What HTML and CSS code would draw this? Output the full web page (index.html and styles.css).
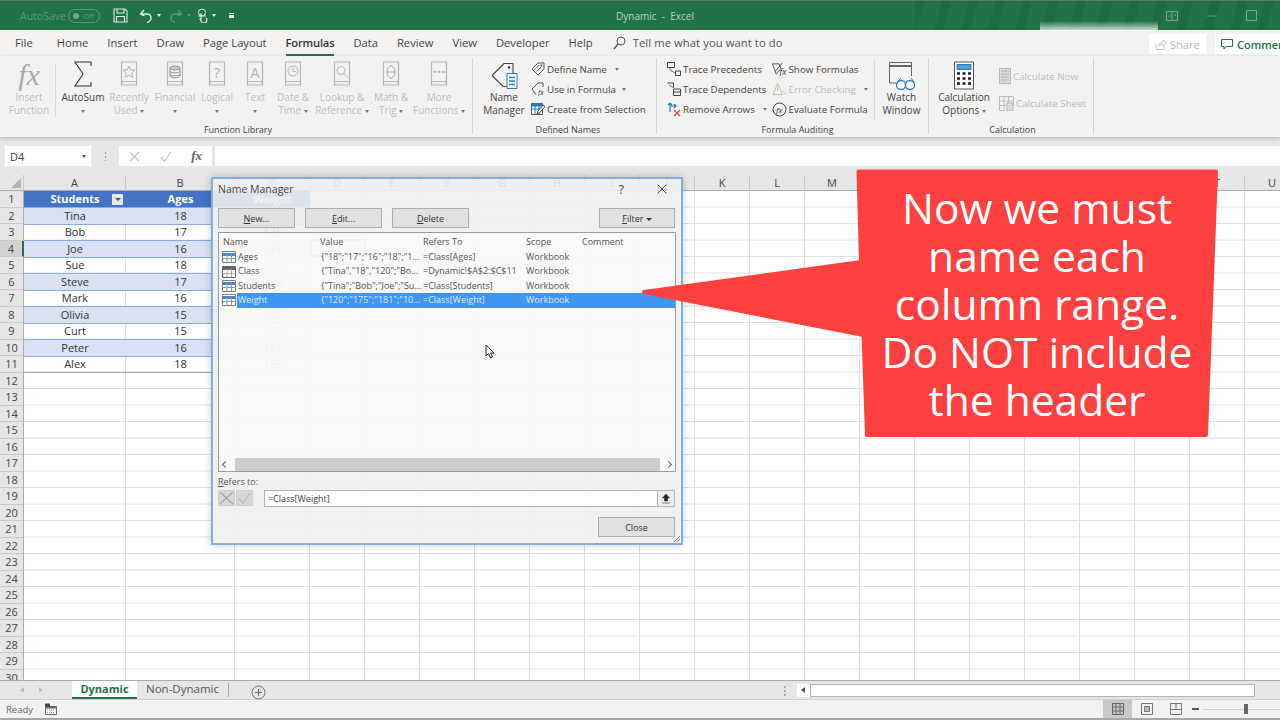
FILE: index.html
```html
<!DOCTYPE html>
<html lang="en">
<head>
    <meta charset="UTF-8">
    <title>Dynamic - Excel</title>
    <link rel="stylesheet" href="styles.css">
</head>
<body>
    <svg class="icon-defs" width="0" height="0">
        <symbol id="i-book" viewBox="0 0 18 25">
            <path d="M1.5 1h15v23h-15zM1.5 20.5h15" fill="none" stroke="currentColor" stroke-width="1.2"/>
        </symbol>
        <symbol id="i-table" viewBox="0 0 14 12">
            <path d="M.5.5h13v11H.5z" fill="#fff" stroke="#7d7d7d"/>
            <path d="M.5 3.5h13" stroke="#4a86c8" stroke-width="3"/>
            <path d="M.5 7.5h13M5 3v8M9.5 3v8" stroke="#7d9ac0"/>
        </symbol>
        <symbol id="i-tag" viewBox="0 0 14 14">
            <path d="M1 7 7 1h6v6l-6 6z" fill="none" stroke="#555" stroke-width="1"/>
            <path d="M3.5 7.5 8 3M5.5 9.5 10 5" stroke="#888"/>
            <circle cx="10.5" cy="3.5" r="1" fill="#555"/>
        </symbol>
    </svg>

    <header class="title-bar">
        <div class="qat">
            <span class="autosave">AutoSave</span>
            <span class="toggle"><i></i>Off</span>
            <svg class="qat-save" width="15" height="15" viewBox="0 0 15 15"><path d="M1 1h11l2 2v11H1zM4 1v4h7V1M3.5 14V8.5h8V14" fill="none" stroke="#d9e8df" stroke-width="1.1"/></svg>
            <svg class="qat-undo" width="14" height="14" viewBox="0 0 14 14"><path d="M5 1 1.5 5 5.500 7M2 5h6a4 4 0 0 1 2 7.500L8 14" fill="none" stroke="#e2eee7" stroke-width="1.3"/></svg>
            <span class="qat-arrow"></span>
            <svg class="qat-redo" width="14" height="14" viewBox="0 0 14 14"><path d="M9 1l3.5 4-4 2M12 5H6a4 4 0 0 0-2 7.500L6 14" fill="none" stroke="#5d9b78" stroke-width="1.3"/></svg>
            <span class="qat-arrow dim"></span>
            <svg class="qat-touch" width="12" height="15" viewBox="0 0 12 15"><circle cx="6" cy="4.5" r="3.5" fill="none" stroke="#e2eee7"/><path d="M2 8h8M5 5v6l-2 0M5 11a3 3 0 1 0 5-1" fill="none" stroke="#e2eee7" stroke-width="1.1"/></svg>
            <span class="qat-arrow"></span>
            <span class="qat-more"></span>
        </div>
        <div class="app-title">Dynamic  -  Excel</div>
        <div class="title-smear"></div>
        <div class="window-btns">
            <svg width="12" height="11" viewBox="0 0 12 11"><path d="M.5 1.500h11v9H.5zM6 1.500v9M3 6l2 0M8 5l2 0" fill="none" stroke="#76a88b"/></svg>
            <svg width="10" height="2" viewBox="0 0 10 2"><path d="M0 1h10" stroke="#5f9c7a"/></svg>
            <svg width="11" height="11" viewBox="0 0 11 11"><path d="M.5.500h10v10H.5z" fill="none" stroke="#76a88b"/></svg>
        </div>
    </header>

    <nav class="tabs">
        <span class="tab tab-file">File</span>
        <span class="tab">Home</span>
        <span class="tab">Insert</span>
        <span class="tab">Draw</span>
        <span class="tab">Page Layout</span>
        <span class="tab active">Formulas</span>
        <span class="tab">Data</span>
        <span class="tab">Review</span>
        <span class="tab">View</span>
        <span class="tab">Developer</span>
        <span class="tab">Help</span>
        <span class="tell-me">
            <svg width="13" height="14" viewBox="0 0 13 14"><circle cx="8" cy="5" r="4" fill="none" stroke="#555"/><path d="M5 8 1 13" stroke="#555" stroke-width="1.3"/></svg>
            Tell me what you want to do
        </span>
        <span class="share">
            <svg width="11" height="11" viewBox="0 0 11 11"><path d="M1 5v5.500h8V7M4 7c0-3 2-4 4-4V1l3 3-3 3V5C6 5 5 6 4 7z" fill="none" stroke="#c4c4c4"/></svg>
            Share
        </span>
        <span class="comments">
            <svg width="12" height="11" viewBox="0 0 12 11"><path d="M.5.500h11v7H5l-2 2.500V7.500H.5z" fill="none" stroke="#217346"/></svg>
            Comments
        </span>
    </nav>

    <section class="ribbon">
        <div class="group group-library">
            <div class="group-body">
                <div class="big-btn w50 off">
                    <span class="fx-big">fx</span>
                    <span class="big-label">Insert<br>Function</span>
                </div>
                <span class="mini-sep"></span>
                <div class="big-btn w48">
                    <span class="sigma">
                        <svg width="20" height="26" viewBox="0 0 20 26"><path d="M18 5V1H2l8 12-8 12h16v-4" fill="none" stroke="#333" stroke-width="1.1"/></svg>
                    </span>
                    <span class="big-label">AutoSum<br><i class="caret"></i></span>
                </div>
                <div class="big-btn w44 off">
                    <span class="book"><svg width="18" height="25"><use href="#i-book"/></svg><svg class="glyph" width="14" height="14" viewBox="0 0 14 14"><path d="m7 1 1.800 4H13L9.700 8l1 4.500L7 10l-3.700 2.500 1-4.500L1 5h4.200z" fill="none" stroke="#b5b5b5"/></svg></span>
                    <span class="big-label">Recently<br>Used <i class="caret"></i></span>
                </div>
                <div class="big-btn w48 off">
                    <span class="book"><svg width="18" height="25"><use href="#i-book"/></svg><svg class="glyph" width="12" height="14" viewBox="0 0 12 14"><ellipse cx="6" cy="3" rx="5" ry="2" fill="#ccc" stroke="#8f8f8f"/><path d="M1 3v8c0 2.500 10 2.500 10 0V3M1 6c0 2.500 10 2.500 10 0M1 9c0 2.500 10 2.500 10 0" fill="none" stroke="#8f8f8f"/></svg></span>
                    <span class="big-label">Financial<br><i class="caret"></i></span>
                </div>
                <div class="big-btn w36 off">
                    <span class="book"><svg width="18" height="25"><use href="#i-book"/></svg><span class="glyph-text">?</span></span>
                    <span class="big-label">Logical<br><i class="caret"></i></span>
                </div>
                <div class="big-btn w40 off">
                    <span class="book"><svg width="18" height="25"><use href="#i-book"/></svg><span class="glyph-text">A</span></span>
                    <span class="big-label">Text<br><i class="caret"></i></span>
                </div>
                <div class="big-btn w36 off">
                    <span class="book"><svg width="18" height="25"><use href="#i-book"/></svg><svg class="glyph" width="12" height="12" viewBox="0 0 12 12"><circle cx="6" cy="6" r="5" fill="none" stroke="#b5b5b5"/><path d="M6 3v3.500h3" fill="none" stroke="#b5b5b5"/></svg></span>
                    <span class="big-label">Date &amp;<br>Time <i class="caret"></i></span>
                </div>
                <div class="big-btn w62 off">
                    <span class="book"><svg width="18" height="25"><use href="#i-book"/></svg><svg class="glyph" width="13" height="13" viewBox="0 0 13 13"><circle cx="5.5" cy="5.5" r="4" fill="none" stroke="#b5b5b5"/><path d="m8.500 8.500 4 4" stroke="#b5b5b5"/></svg></span>
                    <span class="big-label">Lookup &amp;<br>Reference <i class="caret"></i></span>
                </div>
                <div class="big-btn w36 off">
                    <span class="book"><svg width="18" height="25"><use href="#i-book"/></svg><svg class="glyph" width="10" height="14" viewBox="0 0 10 14"><ellipse cx="5" cy="7" rx="4" ry="6" fill="none" stroke="#a5a5a5"/><path d="M1 7h8" stroke="#a5a5a5"/></svg></span>
                    <span class="big-label">Math &amp;<br>Trig <i class="caret"></i></span>
                </div>
                <div class="big-btn w60 off">
                    <span class="book"><svg width="18" height="25"><use href="#i-book"/></svg><span class="glyph-text dots">···</span></span>
                    <span class="big-label">More<br>Functions <i class="caret"></i></span>
                </div>
            </div>
            <div class="group-label">Function Library</div>
        </div>

        <div class="group group-names">
            <div class="group-body">
                <div class="big-btn w48">
                    <svg class="big-icon" width="27" height="28" viewBox="0 0 27 28">
                        <path d="M1 14 13 2h9v12M1 14l11 11h5" fill="none" stroke="#444" stroke-width="1.1"/>
                        <circle cx="18" cy="6" r="1.2" fill="#333"/>
                        <path d="M16 12h10v15H16z" fill="#fff" stroke="#2b7cc4"/>
                        <path d="M18 16h6M18 19.500h6M18 23h6" stroke="#2b7cc4" stroke-width="1.6"/>
                    </svg>
                    <span class="big-label">Name<br>Manager</span>
                </div>
                <div class="small-col names-col">
                    <div class="small-btn"><svg width="14" height="14"><use href="#i-tag"/></svg>Define Name <i class="caret gap"></i></div>
                    <div class="small-btn"><svg width="14" height="14" viewBox="0 0 14 14"><path d="M5 12.500 1 7l6-6h5v4" fill="none" stroke="#555"/><text x="7" y="13" font-size="7" font-style="italic" fill="#333">fx</text></svg>Use in Formula <i class="caret"></i></div>
                    <div class="small-btn"><svg width="14" height="14" viewBox="0 0 14 14"><path d="M.5 1.500h11v11H.5z" fill="#fff" stroke="#555"/><path d="M.5 3h11" stroke="#2b7cc4" stroke-width="3"/><path d="M4 3v9M8 3v9M1 7h10" stroke="#2b7cc4"/><path d="m6 12 1-3 5-6 2 1.500-5 6z" fill="#fff" stroke="#444"/></svg>Create from Selection</div>
                </div>
            </div>
            <div class="group-label">Defined Names</div>
        </div>

        <div class="group group-audit">
            <div class="group-body">
                <div class="small-col audit-col">
                    <div class="small-btn"><svg width="14" height="14" viewBox="0 0 14 14"><path d="M.500.500h7v5h-7zM8.500 9h5v4.500h-5z" fill="none" stroke="#444"/><path d="M3 6v2l5 3" fill="none" stroke="#2b7cc4"/></svg>Trace Precedents</div>
                    <div class="small-btn"><svg width="14" height="14" viewBox="0 0 14 14"><path d="M.500 1h6v4M6.500 7h7v6.500h-7zM6.500 10h7" fill="none" stroke="#444"/><path d="M2 3l5 3" fill="none" stroke="#2b7cc4"/></svg>Trace Dependents</div>
                    <div class="small-btn"><svg width="14" height="15" viewBox="0 0 14 15"><path d="M3 1v9M3 1l-2 2M3 1l2 2M3 4h6M7 2l2 2-2 2" fill="none" stroke="#2b7cc4" stroke-width="1.2"/><path d="m7 8 6 6M13 8l-6 6" stroke="#d9483b" stroke-width="1.2"/></svg>Remove Arrows <i class="caret gap"></i></div>
                </div>
                <div class="small-col audit-col">
                    <div class="small-btn"><svg width="15" height="14" viewBox="0 0 16 14"><path d="M.500 1.500h7l2 5-5 6z" fill="none" stroke="#555"/><path d="M3 10 11 .5" stroke="#555"/><text x="8" y="13" font-size="9" font-style="italic" fill="#333">fx</text></svg>Show Formulas</div>
                    <div class="small-btn off"><svg width="15" height="14" viewBox="0 0 16 14"><path d="m6 1 5 12H1zM11 9l4 4" fill="none" stroke="#bbb"/><path d="M6 5v4" stroke="#c9b77a"/></svg>Error Checking <i class="caret gap"></i></div>
                    <div class="small-btn"><svg width="15" height="15" viewBox="0 0 15 15"><circle cx="7.5" cy="7.5" r="6.5" fill="none" stroke="#444"/><text x="4" y="10.500" font-size="8" font-style="italic" fill="#333">fx</text></svg>Evaluate Formula</div>
                </div>
                <span class="group-sep"></span>
                <div class="big-btn w53">
                    <svg class="big-icon" width="27" height="29" viewBox="0 0 27 29">
                        <path d="M1.500 22V1.500h22V15" fill="none" stroke="#666"/>
                        <path d="M1.500 5h22" stroke="#666" stroke-width="2"/>
                        <path d="M1.500 22h7" stroke="#666"/>
                        <circle cx="13" cy="24" r="4.5" fill="#fff" stroke="#2b7cc4" stroke-width="1.3"/>
                        <circle cx="22" cy="24" r="4.5" fill="#fff" stroke="#2b7cc4" stroke-width="1.3"/>
                        <path d="M9 21l4-4M26 21l-3-4" stroke="#2b7cc4"/>
                    </svg>
                    <span class="big-label">Watch<br>Window</span>
                </div>
            </div>
            <div class="group-label">Formula Auditing</div>
        </div>

        <div class="group group-calc">
            <div class="group-body">
                <div class="big-btn w64">
                    <svg class="big-icon" width="20" height="28" viewBox="0 0 20 28">
                        <path d="M.5.500h19v27H.5z" fill="#fff" stroke="#555"/>
                        <path d="M3 3h14v5H3z" fill="#5b9bd5" stroke="#2b7cc4"/>
                        <path d="M3 12h3M8.500 12h3M14 12h3M3 17h3M8.500 17h3M14 17h3M3 22h3M8.500 22h3M14 22h3" stroke="#222" stroke-width="2.5"/>
                    </svg>
                    <span class="big-label">Calculation<br>Options <i class="caret"></i></span>
                </div>
                <div class="small-col calc-col off">
                    <div class="small-btn"><svg width="12" height="16" viewBox="0 0 12 16"><path d="M.5.500h11v15H.5z" fill="#ddd" stroke="#b5b5b5"/><path d="M2.500 3h7M2.500 6h7M2.500 9h7M2.500 12h7" stroke="#aaa" stroke-dasharray="2 1" stroke-width="1.5"/></svg>Calculate Now</div>
                    <div class="small-btn"><svg width="15" height="15" viewBox="0 0 15 15"><path d="M.5.500h14v9h-14zM5 .5v14H.5v-5M9.500 .5v9M.5 5h14" fill="none" stroke="#bbb"/><path d="M8 7h6v8H8z" fill="#ddd" stroke="#b5b5b5"/></svg>Calculate Sheet</div>
                </div>
            </div>
            <div class="group-label">Calculation</div>
        </div>
    </section>

    <div class="formula-bar">
        <div class="name-box">D4<i class="caret"></i></div>
        <span class="fb-dots"></span>
        <div class="fb-btns">
            <svg width="11" height="11" viewBox="0 0 11 11"><path d="m1 1 9 9M10 1l-9 9" stroke="#c4c4c4" stroke-width="1.2"/></svg>
            <svg width="12" height="11" viewBox="0 0 12 11"><path d="m1 6 3.500 4L11 1" fill="none" stroke="#c4c4c4" stroke-width="1.2"/></svg>
            <span class="fb-fx">fx</span>
        </div>
        <div class="fb-input"></div>
    </div>

    <main class="sheet">
        <div class="col-heads">
            <span class="corner"><i></i></span>
            <span class="col-a">A</span><span class="col-b">B</span><span class="col-c">C</span>
            <span>D</span><span>E</span><span>F</span><span>G</span><span>H</span><span>I</span><span>J</span>
            <span>K</span><span>L</span><span>M</span><span>N</span><span>O</span><span>P</span><span>Q</span>
            <span>R</span><span>S</span><span>T</span><span>U</span>
        </div>
        <div class="sheet-body">
            <div class="row-heads">
                <span>1</span><span>2</span><span>3</span><span class="current">4</span><span>5</span>
                <span>6</span><span>7</span><span>8</span><span>9</span><span>10</span>
                <span>11</span><span>12</span><span>13</span><span>14</span><span>15</span>
                <span>16</span><span>17</span><span>18</span><span>19</span><span>20</span>
                <span>21</span><span>22</span><span>23</span><span>24</span><span>25</span>
                <span>26</span><span>27</span><span>28</span><span>29</span><span>30</span>
            </div>
            <div class="cells">
                <table class="class-table">
                    <tr class="head"><td class="has-filter">Students<i class="filter-btn"></i></td><td>Ages</td><td>Weight</td></tr>
                    <tr><td>Tina</td><td>18</td><td>120</td></tr>
                    <tr><td>Bob</td><td>17</td><td>175</td></tr>
                    <tr><td>Joe</td><td>16</td><td>181</td></tr>
                    <tr><td>Sue</td><td>18</td><td>105</td></tr>
                    <tr><td>Steve</td><td>17</td><td>120</td></tr>
                    <tr><td>Mark</td><td>16</td><td>198</td></tr>
                    <tr><td>Olivia</td><td>15</td><td>135</td></tr>
                    <tr><td>Curt</td><td>15</td><td>165</td></tr>
                    <tr><td>Peter</td><td>16</td><td>171</td></tr>
                    <tr><td>Alex</td><td>18</td><td>155</td></tr>
                </table>
                <div class="active-cell"></div>
            </div>
        </div>
    </main>

    <div class="sheet-tabs">
        <span class="nav-arrows"><i class="arrow-l"></i><i class="arrow-r"></i></span>
        <span class="sheet-tab active">Dynamic</span>
        <span class="sheet-tab">Non-Dynamic</span>
        <span class="add-sheet">
            <svg width="15" height="15" viewBox="0 0 15 15"><circle cx="7.5" cy="7.5" r="6.5" fill="none" stroke="#777"/><path d="M7.500 4v7M4 7.500h7" stroke="#666"/></svg>
        </span>
        <span class="h-scroll"><span class="h-dots"></span><i class="h-left"></i><span class="h-track"></span></span>
    </div>

    <footer class="status-bar">
        <span class="ready">Ready</span>
        <svg width="12" height="12" viewBox="0 0 12 12"><path d="M.5 3.500h11v8H.5z" fill="#fff" stroke="#666"/><path d="M.5 4.500h11" stroke="#666" stroke-width="2"/><path d="M0 2h5" stroke="#444" stroke-width="3"/><path d="M2 7h8M2 9.500h8" stroke="#999" stroke-dasharray="1 1"/></svg>
        <span class="view-btns">
            <span class="view-btn on"><svg width="12" height="12" viewBox="0 0 12 12"><path d="M.5.500h11v11H.5zM4 .5v11M8 .5v11M.5 4h11M.5 8h11" fill="none" stroke="#666"/></svg></span>
            <span class="view-btn"><svg width="12" height="12" viewBox="0 0 12 12"><path d="M.5.500h11v11H.5z" fill="none" stroke="#777"/><path d="M3.500 3.500h5v5h-5z" fill="#bbb" stroke="#777"/></svg></span>
            <span class="view-btn"><svg width="12" height="12" viewBox="0 0 12 12"><path d="M.5.500h11v11H.5zM6 .5v6H.5M6 6.500h5.500" fill="none" stroke="#777"/></svg></span>
        </span>
        <span class="zoom-slider"><i class="minus"></i><span class="track"></span><i class="thumb"></i></span>
    </footer>

    <!-- dialog over the sheet, see-through like in the video -->
    <div class="dialog">
        <div class="dialog-title">
            <span>Name Manager</span>
            <span class="dlg-help">?</span>
            <svg width="10" height="10" viewBox="0 0 10 10"><path d="m.5.500 9 9M9.500.500l-9 9" stroke="#444"/></svg>
        </div>
        <div class="dialog-actions">
            <button class="dlg-btn"><u>N</u>ew...</button>
            <button class="dlg-btn"><u>E</u>dit...</button>
            <button class="dlg-btn"><u>D</u>elete</button>
            <button class="dlg-btn filter"><u>F</u>ilter <i class="caret dark"></i></button>
        </div>
        <div class="name-list">
            <div class="list-head"><span>Name</span><span>Value</span><span>Refers To</span><span>Scope</span><span>Comment</span></div>
            <div class="list-row">
                <svg width="14" height="12"><use href="#i-table"/></svg>
                <div class="row-body"><span>Ages</span><span>{"18";"17";"16";"18";"1...</span><span>=Class[Ages]</span><span>Workbook</span></div>
            </div>
            <div class="list-row">
                <svg width="14" height="12" viewBox="0 0 14 12"><path d="M.5.500h13v11H.5z" fill="#fff" stroke="#666"/><path d="M.5 2.500h13" stroke="#666" stroke-width="3"/><path d="M.5 7.500h13M5 3v8M9.500 3v8" stroke="#aaa"/></svg>
                <div class="row-body"><span>Class</span><span>{"Tina","18","120";"Bo...</span><span>=Dynamic!$A$2:$C$11</span><span>Workbook</span></div>
            </div>
            <div class="list-row">
                <svg width="14" height="12"><use href="#i-table"/></svg>
                <div class="row-body"><span>Students</span><span>{"Tina";"Bob";"Joe";"Su...</span><span>=Class[Students]</span><span>Workbook</span></div>
            </div>
            <div class="list-row selected">
                <svg width="14" height="12"><use href="#i-table"/></svg>
                <div class="row-body"><span>Weight</span><span>{"120";"175";"181";"10...</span><span>=Class[Weight]</span><span>Workbook</span></div>
            </div>
            <div class="list-scroll">
                <i class="chev left"></i><span class="list-thumb"></span><i class="chev right"></i>
            </div>
        </div>
        <label class="refers-label"><u>R</u>efers to:</label>
        <div class="refers-row">
            <span class="ref-btn"><svg width="15" height="14" viewBox="0 0 15 14"><path d="m1 1 13 12M14 1 1 13" stroke="#a9a9a9" stroke-width="1.5"/></svg></span>
            <span class="ref-btn"><svg width="13" height="12" viewBox="0 0 13 12"><path d="m1 7 4 4 7-10" fill="none" stroke="#b9b9b9" stroke-width="1.3"/></svg></span>
            <div class="ref-input">
                <span>=Class[Weight]</span>
                <span class="ref-pick"><svg width="10" height="11" viewBox="0 0 10 11"><path d="M5 1 8.500 5H6.500v3h-3V5H1.500zM1 10h8" fill="#222" stroke="#222" stroke-width=".5"/></svg></span>
            </div>
        </div>
        <div class="dialog-foot"><button class="dlg-btn">Close</button></div>
        <svg class="grip" width="8" height="8" viewBox="0 0 8 8"><path d="M7 1 1 7M7 4 4 7" stroke="#888"/></svg>
    </div>

    <svg class="cursor" width="10" height="15" viewBox="0 0 10 15"><path d="M1 1v11l2.500-2.500L5.500 14l2-1-2-4H9z" fill="#fff" stroke="#222"/></svg>

    <svg class="callout-shape" width="590" height="280" viewBox="640 165 590 280">
        <path d="M858.500 171.500H1216L1206 435H867L863.500 335 644 292 861 262z" fill="#fd4040" stroke="#fd4040" stroke-width="4" stroke-linejoin="round"/>
    </svg>
    <div class="callout-text">Now we must<br>name each<br>column range.<br>Do NOT include<br>the header</div>
</body>
</html>
```

FILE: styles.css
```css
/* page */
* {
    box-sizing: border-box;
}

html, body {
    margin: 0;
    padding: 0;
    width: 1280px;
    height: 720px;
    overflow: hidden;
    font-family: "Open Sans", "Liberation Sans", sans-serif;
    color: #444;
    background: #e6e6e6;
}

body {
    display: flex;
    flex-direction: column;
    position: relative;
}

i {
    font-style: normal;
}

.icon-defs {
    position: absolute;
}

.caret {
    display: inline-block;
    width: 0;
    height: 0;
    border: 2px solid transparent;
    border-top: 3px solid #777;
    border-bottom: 0;
    vertical-align: middle;
}

.caret.dark {
    border-top-color: #333;
    border-width: 3px 3px 0;
}

/* title bar */
.title-bar {
    height: 30px;
    flex: none;
    position: relative;
    display: flex;
    align-items: center;
    background: #217346;
    border-top: 1px solid #5f7d6c;
    overflow: hidden;
}

/* faint stripes of the office theme */
.title-bar::before {
    content: "";
    position: absolute;
    left: 915px;
    right: 0;
    top: 0;
    bottom: 0;
    background: repeating-linear-gradient(105deg, rgba(0, 0, 0, 0.07) 0 9px, transparent 9px 26px);
}

.qat {
    display: flex;
    align-items: center;
    padding-left: 20px;
}

.autosave {
    font-size: 10.5px;
    color: #5d9b78;
}

.toggle {
    width: 32px;
    height: 14px;
    margin-left: 2px;
    border: 1px solid #5d9b78;
    border-radius: 7px;
    display: flex;
    align-items: center;
    gap: 4px;
    padding-left: 4px;
    font-size: 8px;
    color: #5d9b78;
}

.toggle i {
    width: 6px;
    height: 6px;
    border-radius: 50%;
    background: #6ea888;
}

.qat-save {
    margin-left: 13px;
}

.qat-undo {
    margin-left: 11px;
}

.qat-arrow {
    width: 0;
    height: 0;
    margin-left: 4px;
    border: 2.5px solid transparent;
    border-top: 3px solid #e2eee7;
    border-bottom: 0;
}

.qat-arrow.dim {
    border-top-color: #5d9b78;
}

.qat-redo {
    margin-left: 8px;
}

.qat-touch {
    margin-left: 5px;
}

.qat-more {
    width: 5px;
    height: 5px;
    margin-left: 13px;
    border-top: 1px solid #e2eee7;
    border-bottom: 3px solid #e2eee7;
}

.app-title {
    position: absolute;
    left: 30px;
    right: 0;
    text-align: center;
    font-size: 10px;
    color: #b9d3c4;
    white-space: pre;
}

/* the stray light smear from the video frame */
.title-smear {
    position: absolute;
    left: 1040px;
    top: 20px;
    width: 118px;
    height: 9px;
    background: linear-gradient(to bottom, rgba(235, 243, 238, 0), rgba(235, 243, 238, 0.8));
}

.window-btns {
    position: absolute;
    top: 9px;
    left: 1166px;
    display: flex;
    align-items: center;
    gap: 29px;
}

/* tabs row */
.tabs {
    height: 26px;
    flex: none;
    display: flex;
    align-items: center;
    padding: 0 0 2px 15px;
    gap: 19px;
    background: #f3f2f1;
    font-size: 11.2px;
    color: #444;
    border-top: 1px solid #fff;
}

.tab {
    position: relative;
}

.tab-file {
    margin-right: 5px;
}

.tab.active {
    color: #333;
    font-weight: 600;
    letter-spacing: -0.2px;
}

.tab.active::after {
    content: "";
    position: absolute;
    left: 0;
    right: 0;
    top: 19px;
    height: 2px;
    background: #217346;
}

.tell-me {
    display: flex;
    align-items: center;
    gap: 7px;
    margin-left: 1px;
    color: #555;
    letter-spacing: 0.1px;
}

.share, .comments {
    position: absolute;
    top: 34px;
    height: 20px;
    display: flex;
    align-items: center;
    gap: 4px;
    background: #fff;
    font-size: 11px;
}

.share svg, .comments svg {
    flex: none;
}

.share {
    left: 1149px;
    width: 57px;
    padding-left: 6px;
    color: #b9b9b9;
}

.comments {
    left: 1215px;
    width: 65px;
    padding-left: 6px;
    color: #217346;
    font-weight: 600;
    white-space: nowrap;
    overflow: hidden;
}

/* ribbon */
.ribbon {
    height: 81px;
    flex: none;
    display: flex;
    background: #f3f2f1;
    box-shadow: 0 1px 3px rgba(0, 0, 0, 0.25);
    position: relative;
    z-index: 1;
}

.group {
    display: flex;
    flex-direction: column;
    border-right: 1px solid #d4d4d4;
    margin: 2px 0 3px;
}

.group-library { width: 473px; padding-left: 4px; }
.group-names { width: 184px; padding-left: 7px; }
.group-audit { width: 272px; padding-left: 10px; }
.group-calc { width: 165px; padding-left: 3px; }

.group-body {
    flex: 1;
    display: flex;
}

.group-label {
    height: 12px;
    line-height: 16px;
    text-align: center;
    font-size: 9px;
    color: #444;
}

.big-btn {
    flex: none;
    display: flex;
    flex-direction: column;
    align-items: center;
    padding-top: 3px;
    font-size: 10px;
    line-height: 13px;
    text-align: center;
    white-space: nowrap;
}

.w36 { width: 36px; }
.w40 { width: 40px; }
.w44 { width: 44px; }
.w48 { width: 48px; }
.w50 { width: 50px; }
.w53 { width: 53px; }
.w60 { width: 60px; }
.w62 { width: 62px; }
.w64 { width: 64px; }

.big-btn.off .big-label {
    color: #bcbcbc;
}

.big-label {
    display: block;
}

.big-icon, .sigma, .book, .fx-big {
    height: 29px;
    margin-bottom: 1px;
}

.book {
    position: relative;
    width: 18px;
    color: #b5b5b5;
    display: block;
}

.book .glyph {
    position: absolute;
    top: 4px;
    left: 50%;
    transform: translateX(-50%);
}

.glyph-text {
    position: absolute;
    top: 1px;
    left: 0;
    width: 18px;
    text-align: center;
    font-size: 15px;
    line-height: 20px;
    color: #b5b5b5;
}

.glyph-text.dots {
    font-weight: 700;
    line-height: 18px;
}

.fx-big {
    font-family: "Liberation Serif", serif;
    font-style: italic;
    font-size: 30px;
    line-height: 27px;
    color: #a9a9a9;
}

.mini-sep {
    width: 1px;
    height: 53px;
    margin: 6px 3px 0 1px;
    background: #d8d8d8;
}

.small-col {
    display: flex;
    flex-direction: column;
    gap: 0;
    padding-top: 1px;
    font-size: 9.8px;
}

.small-btn {
    height: 20px;
    display: flex;
    align-items: center;
    gap: 2px;
    white-space: nowrap;
}

.small-btn svg {
    flex: none;
}

.small-btn .caret {
    margin-left: 4px;
}

.small-btn .caret.gap {
    margin-left: 6px;
}

.small-btn.off, .calc-col.off {
    color: #bcbcbc;
}

.names-col {
    margin-left: 3px;
}

.audit-col {
    width: 105px;
}

.audit-col + .audit-col {
    width: 103px;
}

.group-sep {
    width: 1px;
    height: 60px;
    margin-top: 2px;
    background: #d8d8d8;
}

.calc-col {
    margin-left: 3px;
    padding-top: 8px;
    gap: 7px;
}

/* formula bar */
.formula-bar {
    height: 38px;
    flex: none;
    display: flex;
    align-items: center;
    padding: 0 0 0 5px;
    background: #e6e6e6;
}

.name-box {
    width: 86px;
    height: 20px;
    display: flex;
    align-items: center;
    justify-content: space-between;
    padding: 0 5px 0 5px;
    background: #fff;
    font-size: 11px;
}

.name-box .caret {
    border-top-color: #555;
}

.fb-dots {
    width: 3px;
    height: 10px;
    margin: 0 12px 0 13px;
    background-image: radial-gradient(circle, #999 1px, transparent 1px);
    background-size: 3px 4px;
}

.fb-btns {
    width: 93px;
    height: 20px;
    display: flex;
    align-items: center;
    justify-content: space-between;
    padding: 0 10px 0 10px;
    background: #fff;
}

.fb-fx {
    font-family: "Liberation Serif", serif;
    font-style: italic;
    font-weight: 700;
    font-size: 13px;
    color: #666;
}

.fb-input {
    flex: 1;
    height: 20px;
    margin-left: 3px;
    background: #fff;
}

/* sheet */
.sheet {
    height: 505px;
    flex: none;
    overflow: hidden;
    background: #fff;
}

.col-heads {
    height: 16px;
    display: flex;
    background: #e6e6e6;
    border-bottom: 1px solid #ababab;
    font-size: 11px;
    color: #444;
}

.col-heads span {
    flex: none;
    width: 55px;
    height: 16px;
    line-height: 16px;
    text-align: center;
    border-right: 1px solid #c9c9c9;
}

.col-heads .corner {
    width: 24px;
    position: relative;
}

.corner i {
    position: absolute;
    right: 2px;
    bottom: 3px;
    border: 5px solid #b4b4b4;
    border-top-color: transparent;
    border-left-color: transparent;
}

.col-heads .col-a { width: 102px; }
.col-heads .col-b { width: 109px; }
.col-heads .col-c { width: 75px; }

.sheet-body {
    display: flex;
}

.row-heads {
    width: 24px;
    flex: none;
    background: #e6e6e6;
    border-right: 1px solid #ababab;
    font-size: 11px;
    color: #444;
}

.row-heads span {
    display: block;
    height: 16.5px;
    line-height: 16px;
    text-align: center;
    border-bottom: 1px solid #c9c9c9;
}

.row-heads .current {
    background: #d2d2d2;
    border-right: 2px solid #217346;
    margin-right: -1px;
}

.cells {
    flex: 1;
    position: relative;
    height: 489px;
    background-color: #fff;
    background-image:
        linear-gradient(#dedede, #dedede),
        linear-gradient(#dedede, #dedede),
        linear-gradient(#dedede, #dedede),
        linear-gradient(to bottom, transparent 15.5px, #dedede 15.5px);
    background-size: 1px 100%, 1px 100%, 1px 100%, 100% 16.5px;
    background-position: 101px 0, 210px 0, 285px 0, 0 0;
    background-repeat: no-repeat, no-repeat, no-repeat, repeat-y;
}

/* columns D onwards are all the same width */
.cells::before {
    content: "";
    position: absolute;
    left: 286px;
    right: 0;
    top: 0;
    bottom: 0;
    background: linear-gradient(to right, transparent 54px, #dedede 54px) 0 0 / 55px 100% repeat-x;
}

.class-table {
    position: relative;
    border-collapse: collapse;
    table-layout: fixed;
    width: 286px;
    font-size: 11px;
    color: #333;
}

.class-table td {
    height: 16.5px;
    padding: 0;
    text-align: center;
    border-top: 1px solid #8ea9db;
    line-height: 14px;
    width: 75px;
}

.class-table td:first-child { width: 102px; }
.class-table td:nth-child(2) { width: 109px; }

.class-table tr:nth-child(even) td {
    background: #d9e1f2;
}

.class-table tr:last-child td {
    border-bottom: 1px solid #8ea9db;
}

.class-table .head td {
    background: #4472c4;
    color: #fff;
    font-weight: 700;
    border-top: 0;
    position: relative;
}

.filter-btn {
    position: absolute;
    left: 88px;
    top: 3px;
    width: 11px;
    height: 11px;
    background: #e6e6e6;
}

.filter-btn::after {
    content: "";
    position: absolute;
    left: 3px;
    top: 4px;
    border: 3px solid transparent;
    border-top-color: #555;
    border-bottom: 0;
}

.active-cell {
    position: absolute;
    left: 286px;
    top: 48px;
    width: 56px;
    height: 18px;
    border: 2px solid #217346;
}

/* sheet tabs + scrollbar */
.sheet-tabs {
    height: 20px;
    flex: none;
    display: flex;
    background: #e6e6e6;
    border-top: 1px solid #ababab;
    border-bottom: 1px solid #d0d0d0;
    position: relative;
}

.nav-arrows {
    width: 72px;
    flex: none;
    display: flex;
    align-items: center;
    gap: 15px;
    padding-left: 20px;
}

.arrow-l, .arrow-r {
    border: 3px solid transparent;
}

.arrow-l {
    border-right: 4px solid #bdbdbd;
    border-left: 0;
}

.arrow-r {
    border-left: 4px solid #bdbdbd;
    border-right: 0;
}

.sheet-tab {
    width: 65px;
    height: 18px;
    line-height: 15px;
    text-align: center;
    font-size: 11.5px;
    color: #555;
}

.sheet-tab.active {
    background: #fff;
    color: #217346;
    font-size: 11px;
    font-weight: 700;
    border-bottom: 2px solid #217346;
}

.sheet-tab:not(.active) {
    width: 92px;
    border-right: 1px solid #a9a9a9;
    height: 14px;
    margin-top: 2px;
    line-height: 11px;
}

.add-sheet {
    margin-left: 22px;
    padding-top: 2px;
}

.h-scroll {
    position: absolute;
    left: 783px;
    top: 3px;
    display: flex;
    align-items: center;
    height: 13px;
}

.h-dots {
    width: 4px;
    height: 11px;
    margin-right: 10px;
    background-image: radial-gradient(circle, #aaa 1px, transparent 1.2px);
    background-size: 4px 4px;
}

.h-left {
    width: 13px;
    height: 13px;
    background: #fff;
    position: relative;
}

.h-left::after {
    content: "";
    position: absolute;
    left: 4px;
    top: 3px;
    border: 3px solid transparent;
    border-right: 4px solid #555;
    border-left: 0;
}

.h-track {
    width: 445px;
    height: 13px;
    background: #fff;
    border: 1px solid #b5b5b5;
}

/* status bar */
.status-bar {
    height: 20px;
    flex: none;
    display: flex;
    align-items: center;
    position: relative;
    padding: 0 0 0 6px;
    background: #f3f2f1;
    border-bottom: 2px solid #a8a8a8;
    font-size: 9.5px;
    color: #666;
}

.status-bar > svg {
    margin-left: 12px;
}

.view-btns {
    position: absolute;
    left: 1103px;
    top: 0;
    height: 18px;
    display: flex;
}

.view-btn {
    width: 29px;
    height: 18px;
    display: flex;
    align-items: center;
    justify-content: center;
}

.view-btn.on {
    background: #c8c8c8;
}

.zoom-slider {
    position: absolute;
    left: 1192px;
    top: 0;
    width: 88px;
    height: 18px;
}

.zoom-slider .minus {
    position: absolute;
    left: 0;
    top: 8px;
    width: 7px;
    height: 2px;
    background: #555;
}

.zoom-slider .track {
    position: absolute;
    left: 11px;
    right: 0;
    top: 9px;
    height: 1px;
    background: #cfcfcf;
}

.zoom-slider .thumb {
    position: absolute;
    left: 52px;
    top: 4px;
    width: 4px;
    height: 10px;
    background: #666;
}

/* name manager dialog */
.dialog {
    position: absolute;
    left: 211px;
    top: 177px;
    width: 472px;
    height: 368px;
    padding: 0 6px 0 5px;
    display: flex;
    flex-direction: column;
    background: rgba(240, 240, 240, 0.9);
    border: 2px solid #7fb1dc;
    box-shadow: 0 0 8px rgba(0, 0, 0, 0.2);
    font-size: 9px;
    color: #555;
    z-index: 2;
}

.dialog-title {
    height: 20px;
    display: flex;
    align-items: center;
    font-size: 10.5px;
    color: #444;
}

.dialog-title span:first-child {
    flex: 1;
}

.dlg-help {
    margin-right: 33px;
    font-size: 12px;
}

.dialog-title svg {
    margin-right: 8px;
}

.dialog-actions {
    height: 21px;
    margin-top: 9px;
    display: flex;
    gap: 10px;
}

.dlg-btn {
    width: 77px;
    height: 20px;
    padding: 0;
    font-family: inherit;
    font-size: 9px;
    color: #333;
    background: #e1e1e1;
    border: 1px solid #adadad;
}

.dlg-btn.filter {
    margin-left: auto;
    width: 76px;
}

.name-list {
    height: 240px;
    margin-top: 3px;
    display: flex;
    flex-direction: column;
    background: rgba(255, 255, 255, 0.6);
    border: 1px solid #9c9c9c;
    width: 458px;
    position: relative;
}

.list-head {
    height: 16px;
    margin-bottom: 1px;
    padding-left: 4px;
    display: grid;
    grid-template-columns: 97px 103px 103px 56px 1fr;
    align-items: center;
    white-space: nowrap;
}

.list-row {
    height: 14.4px;
    display: flex;
    align-items: center;
    padding-left: 3px;
    gap: 1px;
    white-space: nowrap;
}

.row-body {
    flex: 1;
    height: 14.4px;
    line-height: 14px;
    display: grid;
    grid-template-columns: 83px 102px 103px 56px;
    padding-left: 1px;
}

.selected .row-body {
    background: #3f95f0;
    color: #dfeaf6;
}

.list-scroll {
    position: absolute;
    left: 0;
    right: 0;
    bottom: 0;
    height: 14px;
    display: flex;
    align-items: center;
    justify-content: space-between;
    padding: 0 4px;
}

.list-thumb {
    width: 425px;
    height: 13px;
    background: #cdcdcd;
}

.chev {
    width: 5px;
    height: 5px;
    border-left: 1px solid #666;
    border-bottom: 1px solid #666;
}

.chev.left {
    transform: rotate(45deg);
}

.chev.right {
    transform: rotate(-135deg);
}

.refers-label {
    margin-top: 3px;
    height: 15px;
    line-height: 14px;
}

.refers-row {
    display: flex;
    height: 17px;
    gap: 1px;
}

.ref-btn {
    width: 17px;
    height: 16px;
    display: flex;
    align-items: center;
    justify-content: center;
    background: #d8d8d8;
    border: 1px solid #cfcfcf;
}

.ref-input {
    width: 413px;
    margin-left: 10px;
    height: 17px;
    display: flex;
    align-items: center;
    justify-content: space-between;
    padding-left: 3px;
    background: #fff;
    border: 1px solid #b5b5b5;
    color: #444;
}

.ref-pick {
    width: 17px;
    height: 15px;
    display: flex;
    align-items: center;
    justify-content: center;
    background: #ececec;
    border-left: 1px solid #b5b5b5;
}

.dialog-foot {
    margin-top: 10px;
    display: flex;
    justify-content: flex-end;
    width: 457px;
}

.grip {
    position: absolute;
    right: 0;
    bottom: 0;
}

.cursor {
    position: absolute;
    left: 485px;
    top: 344px;
    z-index: 3;
}

/* red callout over everything */
.callout-shape {
    position: absolute;
    left: 640px;
    top: 165px;
    z-index: 4;
}

.callout-text {
    position: absolute;
    left: 856px;
    top: 184px;
    width: 362px;
    z-index: 5;
    text-align: center;
    font-size: 42.5px;
    line-height: 48px;
    color: #fff;
    white-space: nowrap;
}
```
